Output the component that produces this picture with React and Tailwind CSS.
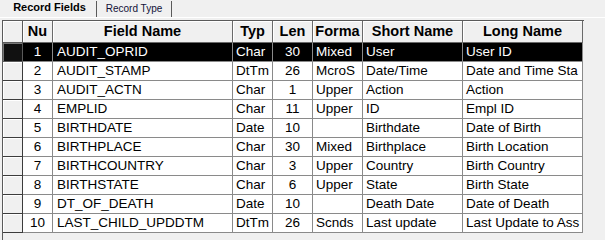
import React from 'react';

const COLS = [
    { key: 'num', label: 'Nu', w: 'w-[30px]', align: 'text-center' },
    { key: 'name', label: 'Field Name', w: 'w-[180px]', align: 'text-left pl-[4px]' },
    { key: 'type', label: 'Typ', w: 'w-[40px]', align: 'text-left pl-[3px]' },
    { key: 'len', label: 'Len', w: 'w-[40px]', align: 'text-center' },
    { key: 'fmt', label: 'Forma', w: 'w-[50px]', align: 'text-left pl-[3px]' },
    { key: 'short', label: 'Short Name', w: 'w-[100px]', align: 'text-left pl-[3px]' },
    { key: 'long', label: 'Long Name', w: 'w-[120px]', align: 'text-left pl-[3px]' },
];

const ROWS = [
    ['1', 'AUDIT_OPRID', 'Char', '30', 'Mixed', 'User', 'User ID'],
    ['2', 'AUDIT_STAMP', 'DtTm', '26', 'McroS', 'Date/Time', 'Date and Time Sta'],
    ['3', 'AUDIT_ACTN', 'Char', '1', 'Upper', 'Action', 'Action'],
    ['4', 'EMPLID', 'Char', '11', 'Upper', 'ID', 'Empl ID'],
    ['5', 'BIRTHDATE', 'Date', '10', '', 'Birthdate', 'Date of Birth'],
    ['6', 'BIRTHPLACE', 'Char', '30', 'Mixed', 'Birthplace', 'Birth Location'],
    ['7', 'BIRTHCOUNTRY', 'Char', '3', 'Upper', 'Country', 'Birth Country'],
    ['8', 'BIRTHSTATE', 'Char', '6', 'Upper', 'State', 'Birth State'],
    ['9', 'DT_OF_DEATH', 'Date', '10', '', 'Death Date', 'Date of Death'],
    ['10', 'LAST_CHILD_UPDDTM', 'DtTm', '26', 'Scnds', 'Last update', 'Last Update to Ass'],
];

export default function App() {
    return (
        <div className="w-[605px] h-[240px] bg-[#f0f0f0] overflow-hidden flex flex-col font-['Liberation_Sans',Arial,sans-serif]">
            {/* tab strip */}
            <div className="h-[18px] flex items-end border-b border-white shrink-0">
                <div className="ml-[3px] w-[93px] h-[18px] flex items-center justify-center text-[11px] font-bold text-black leading-none pb-[2px]">
                    Record Fields
                </div>
                <div className="w-[76px] h-[16px] border-l border-r border-[#5a5a5a] flex items-center justify-center text-[10px] text-[#121238] leading-none">
                    Record Type
                </div>
            </div>

            {/* grid */}
            <div className="mt-[2px] ml-[2px] flex-1 border-l border-[#5a5a5a] flex flex-col">
                <div className="flex h-[23px] border-t border-[#5a5a5a] w-[581px]">
                    <div className="w-[20px] h-full bg-[#f0f0f0] border-r border-b border-[#5a5a5a] shadow-[inset_1px_1px_0_#fff]" />
                    {COLS.map((c) => (
                        <div
                            key={c.key}
                            className={`${c.w} h-full bg-[#f0f0f0] border-r border-b border-[#6a6a6a] shadow-[inset_1px_1px_0_#fff] flex items-center justify-center overflow-hidden whitespace-nowrap text-[14.5px] font-bold text-black leading-none`}
                        >
                            {c.label}
                        </div>
                    ))}
                </div>
                {ROWS.map((r, i) => {
                    const sel = i === 0;
                    return (
                        <div key={r[0]} className="flex h-[19px]">
                            <div
                                className={
                                    sel
                                        ? 'w-[20px] h-full bg-[#111] border-r border-b border-[#5a5a5a] shadow-[inset_1px_1px_0_#777]'
                                        : 'w-[20px] h-full bg-[#f0f0f0] border-r border-b border-[#3c3c3c] shadow-[inset_1px_1px_0_#fff]'
                                }
                            />
                            {COLS.map((c, j) => (
                                <div
                                    key={c.key}
                                    className={`${c.w} ${c.align} h-full border-r border-b border-[#8a8a8a] overflow-hidden whitespace-nowrap text-[13.5px] leading-[18px] ${
                                        sel ? 'bg-black text-white' : 'bg-white text-black'
                                    }`}
                                >
                                    {r[j]}
                                </div>
                            ))}
                        </div>
                    );
                })}
            </div>
        </div>
    );
}
